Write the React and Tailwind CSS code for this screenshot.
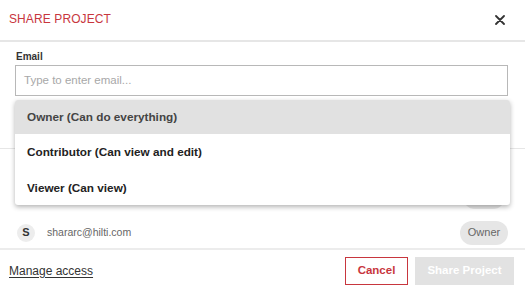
import React from "react";

export default function App() {
  return (
    <div className="relative w-[525px] h-[291px] bg-white overflow-hidden text-[#333]" style={{ fontFamily: '"Liberation Sans", Arial, sans-serif' }}>
      {/* Header */}
      <div className="h-[42px] flex items-center justify-between pl-[9px] pr-[20px] border-b-2 border-[#e6e6e6]">
        <span className="text-[12px] text-[#c8363e] tracking-[0.1px] -mt-[3px]">SHARE PROJECT</span>
        <svg width="10" height="10" viewBox="0 0 10 10" className="-mt-[1px]">
          <path d="M1 1 L9 9 M9 1 L1 9" stroke="#333" strokeWidth="1.8" strokeLinecap="round" />
        </svg>
      </div>

      {/* Email section */}
      <div className="h-[107px] border-b border-[#e6e6e6] px-[15px] pt-[9px]">
        <div className="text-[10px] font-bold leading-[12px] text-[#333] pl-[1px]">Email</div>
        <div className="mt-[2px] h-[31px] w-[493px] border border-[#b8b8b8] flex items-center pl-[8px] text-[11.5px] text-[#a8a8a8]">
          Type to enter email...
        </div>
      </div>

      {/* People list */}
      <div className="h-[101px] border-b-2 border-[#ececec]">
        <div className="h-[30px]"></div>
        <div className="h-[36px] flex items-center justify-end pr-[20px]">
          <div className="w-[42px] h-[24px] rounded-full bg-[#e6e6e6]"></div>
        </div>
        <div className="h-[35px] flex items-center pl-[17px] pr-[17px]">
          <div className="w-[18px] h-[18px] rounded-full bg-[#ededed] flex items-center justify-center text-[11px] font-bold text-[#333]">S</div>
          <span className="ml-[12px] text-[10.5px] text-[#666]">shararc@hilti.com</span>
          <div className="ml-auto w-[48px] h-[24px] rounded-full bg-[#e6e6e6] flex items-center justify-center text-[11px] text-[#666]">Owner</div>
        </div>
      </div>

      {/* Footer */}
      <div className="h-[41px] flex items-center pl-[9px] pr-[11px]">
        <span className="text-[12px] underline underline-offset-2 text-[#333]">Manage access</span>
        <div className="ml-auto flex gap-[7px]">
          <button className="w-[63px] h-[28px] border border-[#c8363e] text-[#c8363e] text-[11.5px] font-bold">Cancel</button>
          <button className="w-[99px] h-[28px] bg-[#e2e2e2] text-white text-[11.5px] font-bold">Share Project</button>
        </div>
      </div>

      {/* Dropdown menu overlay */}
      <div className="absolute left-[15px] top-[100px] w-[495px] bg-white rounded-[3px] shadow-[0_2px_5px_rgba(0,0,0,0.3)] overflow-hidden">
        <div className="h-[34px] bg-[#e1e1e1] flex items-center pl-[12px] text-[11.75px] font-bold text-[#444]">Owner (Can do everything)</div>
        <div className="h-[36px] flex items-center pl-[12px] text-[11.75px] font-bold text-[#222]">Contributor (Can view and edit)</div>
        <div className="h-[35px] flex items-center pl-[12px] text-[11.75px] font-bold text-[#222]">Viewer (Can view)</div>
      </div>
    </div>
  );
}
